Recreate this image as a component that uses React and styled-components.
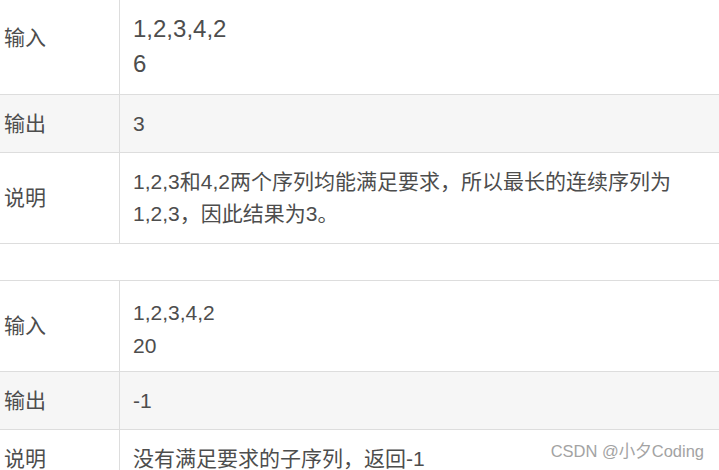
import React from 'react'
import styled, {createGlobalStyle} from 'styled-components'

const Global = createGlobalStyle`
    html, body {
        margin: 0;
        padding: 0;
        background: #fff;
    }
    body {
        width: 719px;
        height: 470px;
        overflow: hidden;
        font-family: "Liberation Sans", "Noto Sans CJK SC", sans-serif;
        color: #4d4d4d;
    }
`

const Pagina = styled.div`
    position: relative;
    width: 719px;
    height: 470px;
`

const Tabla = styled.div`
    display: flex;
    flex-direction: column;
    border-top: ${props => props.$top ? '1px solid #dddddd' : 'none'};
    margin-top: ${props => props.$gap || 0}px;
`

const Fila = styled.div`
    display: grid;
    grid-template-columns: 120px 1fr;
    background: ${props => props.$gris ? '#f6f6f6' : '#fff'};
    border-bottom: 1px solid #dddddd;
`

const Etiqueta = styled.div`
    display: flex;
    align-items: center;
    padding: 0 0 ${props => props.$sube || 0}px 4px;
    border-right: 1px solid #dddddd;
    font-size: 21px;
    line-height: 32px;
`

const Valor = styled.div`
    padding: ${props => props.$pad || '13px 12px 13px 13px'};
    font-size: ${props => props.$size || 21}px;
    line-height: ${props => props.$lh || 32}px;
`

const Marca = styled.div`
    position: absolute;
    right: 15px;
    top: 441px;
    font-size: 16.5px;
    line-height: 20px;
    color: #a3a3a3;
`

const App = () => {
  return (
    <Pagina>
        <Global />
        <Tabla>
            <Fila>
                <Etiqueta $sube={18}>输入</Etiqueta>
                <Valor $size={24} $lh={35} $pad="11px 12px 13px 13px">1,2,3,4,2<br />6</Valor>
            </Fila>
            <Fila $gris>
                <Etiqueta>输出</Etiqueta>
                <Valor $pad="13px 12px 12px 13px">3</Valor>
            </Fila>
            <Fila>
                <Etiqueta>说明</Etiqueta>
                <Valor>1,2,3和4,2两个序列均能满足要求，所以最长的连续序列为<br />1,2,3，因此结果为3。</Valor>
            </Fila>
        </Tabla>
        <Tabla $top $gap={36}>
            <Fila>
                <Etiqueta>输入</Etiqueta>
                <Valor $lh={33} $pad="15px 12px 9px 13px">1,2,3,4,2<br />20</Valor>
            </Fila>
            <Fila $gris>
                <Etiqueta>输出</Etiqueta>
                <Valor $pad="13px 12px 12px 13px">-1</Valor>
            </Fila>
            <Fila>
                <Etiqueta>说明</Etiqueta>
                <Valor>没有满足要求的子序列，返回-1</Valor>
            </Fila>
        </Tabla>
        <Marca>CSDN @小夕Coding</Marca>
    </Pagina>
  )
}

export default App
